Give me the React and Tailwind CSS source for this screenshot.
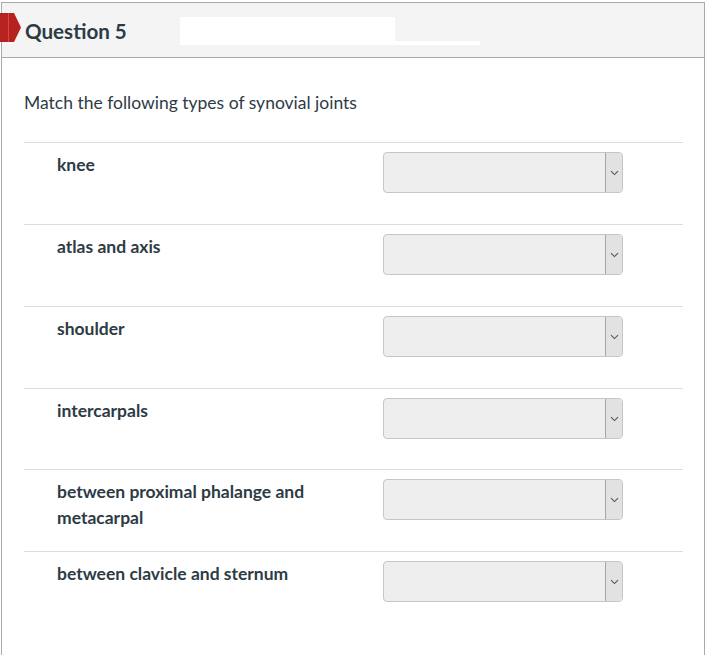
import React from "react";

const rows = [
  ["knee", "h-[82px]"],
  ["atlas and axis", "h-[82px]"],
  ["shoulder", "h-[82px]"],
  ["intercarpals", "h-[81px]"],
  ["between proximal phalange and metacarpal", "h-[82px]"],
  ["between clavicle and sternum", "h-[82px]"],
];

function Select() {
  return (
    <div className="flex h-[41px] w-[240px] rounded-[4px] border border-[#c6c6c6] bg-[#eeeeee] overflow-hidden">
      <div className="flex-1" />
      <div className="flex w-[17px] items-center justify-center border-l border-[#a6a6a6] bg-[#e2e2e2]">
        <svg width="9" height="6" viewBox="0 0 9 6" className="mt-[1px]">
          <path d="M1 1.2 L4.5 4.6 L8 1.2" fill="none" stroke="#555" strokeWidth="1.1" />
        </svg>
      </div>
    </div>
  );
}

export default function App() {
  return (
    <div className="h-[655px] w-[705px] bg-white pt-[2px] pl-[1px]" style={{ fontFamily: "Lato, 'Open Sans', sans-serif" }}>
      <div className="relative h-[653px] w-[704px] border-x border-t border-[#aaaaaa]">
        <div className="relative flex h-[55px] items-center border-b border-[#aaaaaa] bg-[#f4f4f4]">
          <svg className="absolute left-[-2px] top-[10px]" width="22" height="30" viewBox="0 0 22 30">
            <path d="M0 0 H14 L21 14.5 L14 29 H0 Z" fill="#b5221f" />
            <rect x="8" y="0" width="1" height="29" fill="#cf4a44" />
          </svg>
          <div className="ml-[23px] mt-[2px] text-[20.6px] font-bold leading-none text-[#2d3b45]">Question 5</div>
          <div className="absolute left-[178px] top-[14px] h-[24px] w-[215px] bg-white" />
          <div className="absolute left-[178px] top-[38px] h-[4px] w-[300px] bg-white" />
        </div>
        <div className="px-[22px] pt-[35px]">
          <p className="text-[17.5px] leading-[20px] text-[#2d3b45]">Match the following types of synovial joints</p>
          <div className="mt-[29px] w-[659px]">
            {rows.map(([r, h]) => (
              <div key={r} className={`flex ${h} border-t border-[#dddddd] pt-[9px]`}>
                <div className="ml-[33px] w-[300px] text-[17.5px] font-bold leading-[26px] text-[#2d3b45]">{r}</div>
                <div className="ml-[26px]">
                  <Select />
                </div>
              </div>
            ))}
          </div>
        </div>
      </div>
    </div>
  );
}
